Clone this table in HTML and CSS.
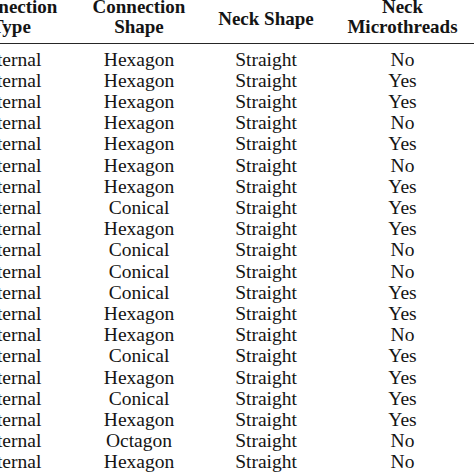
FILE: index.html
```html
<!DOCTYPE html>
<html lang="en">
<head>
<meta charset="utf-8">
<title>Implant connection table</title>
<link rel="stylesheet" href="styles.css">
</head>
<body>
<div class="table">
  <div class="thead">
    <div class="th">Connection<br>Type</div>
    <div class="th">Connection<br>Shape</div>
    <div class="th single">Neck Shape</div>
    <div class="th">Neck<br>Microthreads</div>
  </div>
  <div class="tbody">
    <div class="td">Internal</div><div class="td">Hexagon</div><div class="td">Straight</div><div class="td">No</div>
    <div class="td">Internal</div><div class="td">Hexagon</div><div class="td">Straight</div><div class="td">Yes</div>
    <div class="td">Internal</div><div class="td">Hexagon</div><div class="td">Straight</div><div class="td">Yes</div>
    <div class="td">Internal</div><div class="td">Hexagon</div><div class="td">Straight</div><div class="td">No</div>
    <div class="td">Internal</div><div class="td">Hexagon</div><div class="td">Straight</div><div class="td">Yes</div>
    <div class="td">Internal</div><div class="td">Hexagon</div><div class="td">Straight</div><div class="td">No</div>
    <div class="td">Internal</div><div class="td">Hexagon</div><div class="td">Straight</div><div class="td">Yes</div>
    <div class="td">Internal</div><div class="td">Conical</div><div class="td">Straight</div><div class="td">Yes</div>
    <div class="td">Internal</div><div class="td">Hexagon</div><div class="td">Straight</div><div class="td">Yes</div>
    <div class="td">Internal</div><div class="td">Conical</div><div class="td">Straight</div><div class="td">No</div>
    <div class="td">Internal</div><div class="td">Conical</div><div class="td">Straight</div><div class="td">No</div>
    <div class="td">Internal</div><div class="td">Conical</div><div class="td">Straight</div><div class="td">Yes</div>
    <div class="td">Internal</div><div class="td">Hexagon</div><div class="td">Straight</div><div class="td">Yes</div>
    <div class="td">Internal</div><div class="td">Hexagon</div><div class="td">Straight</div><div class="td">No</div>
    <div class="td">Internal</div><div class="td">Conical</div><div class="td">Straight</div><div class="td">Yes</div>
    <div class="td">Internal</div><div class="td">Hexagon</div><div class="td">Straight</div><div class="td">Yes</div>
    <div class="td">Internal</div><div class="td">Conical</div><div class="td">Straight</div><div class="td">Yes</div>
    <div class="td">Internal</div><div class="td">Hexagon</div><div class="td">Straight</div><div class="td">Yes</div>
    <div class="td">Internal</div><div class="td">Octagon</div><div class="td">Straight</div><div class="td">No</div>
    <div class="td">Internal</div><div class="td">Hexagon</div><div class="td">Straight</div><div class="td">No</div>
  </div>
</div>
</body>
</html>
```

FILE: styles.css
```css
html, body {
  margin: 0;
  padding: 0;
  background: #ffffff;
  overflow: hidden;
}

body {
  font-family: "Liberation Serif", "Times New Roman", serif;
  color: #141414;
}

.table {
  width: 529px;
  margin-left: -54px;
  margin-top: -3px;
}

.thead,
.tbody {
  display: grid;
  grid-template-columns: 130px 126px 128px 145px;
}

.th {
  display: flex;
  flex-direction: column;
  justify-content: center;
  align-items: center;
  text-align: center;
  height: 40px;
  padding-bottom: 6px;
  border-bottom: 1px solid #262626;
  font-weight: bold;
  font-size: 19px;
  line-height: 20px;
}

.th.single {
  height: 37px;
  padding-top: 3px;
}

.tbody {
  padding-top: 4.5px;
}

.td {
  text-align: center;
  font-size: 19.5px;
  line-height: 21.2px;
  white-space: nowrap;
}
```
